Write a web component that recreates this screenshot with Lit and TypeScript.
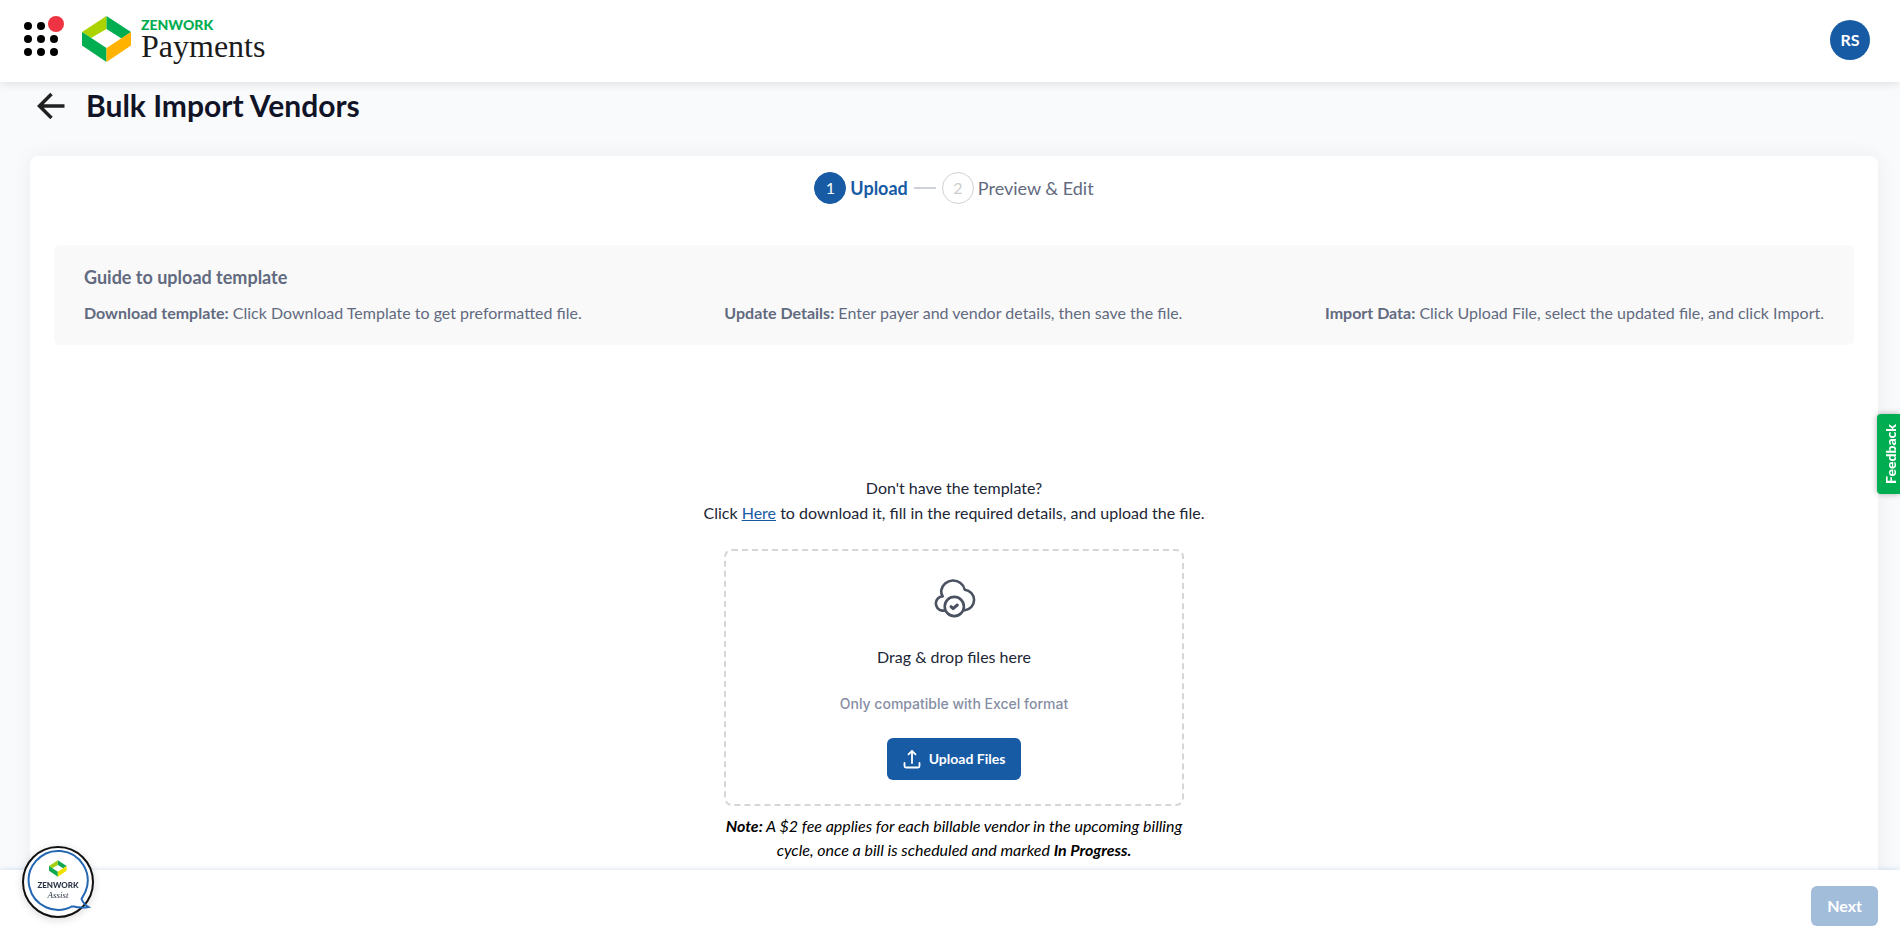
import { LitElement, html, css, svg } from "lit";
import { customElement } from "lit/decorators.js";

const mark = (lime: string, green: string, gold: string) => svg`
  <path fill=${lime} d="M0 16 24.5 0v13L9 22z" />
  <path fill=${green} d="M24.5 0 49 16l-9.5 6.5-15-9.5z" />
  <path fill=${green} d="M0 16l24.5 16v14L0 29.500z" />
  <path fill=${gold} d="M49 16v13.500L24.500 46V32z" />
`;

const STEPS = [
  { label: "Upload", active: true },
  { label: "Preview & Edit", active: false },
];

const GUIDE = [
  { title: "Download template:", text: "Click Download Template to get preformatted file." },
  { title: "Update Details:", text: "Enter payer and vendor details, then save the file." },
  { title: "Import Data:", text: "Click Upload File, select the updated file, and click Import." },
];

@customElement("app-header")
export class AppHeader extends LitElement {
  static styles = css`
    :host {
      display: flex;
      align-items: center;
      justify-content: space-between;
      box-sizing: border-box;
      height: 82px;
      padding: 0 30px 2px 22px;
      background: #fff;
      box-shadow: 0 0 10px rgba(0, 0, 0, 0.15);
      position: relative;
      z-index: 2;
    }
    .left, .brand {
      display: flex;
      align-items: center;
    }
    .left {
      gap: 16px;
      padding-bottom: 2px;
    }
    .brand {
      gap: 9px;
      color: #1b1b1b;
      text-decoration: none;
    }
    .apps {
      border: 0;
      padding: 0;
      background: none;
      cursor: pointer;
    }
    svg { display: block; }
    .name {
      display: flex;
      flex-direction: column;
    }
    .company {
      font: 900 14px/14px Lato, sans-serif;
      color: #00ad50;
    }
    .product {
      font: 32px/28px "Liberation Serif", serif;
    }
    .avatar {
      width: 40px;
      height: 40px;
      border: 0;
      border-radius: 50%;
      padding: 0;
      background: #185ba5;
      color: #fff;
      font: 700 16px/24px Lato, sans-serif;
    }
  `;

  render() {
    return html`
      <div class="left">
        <button class="apps" aria-label="Apps">
          <svg width="44" height="46" viewBox="0 0 44 46">
            ${[10, 23, 36].map((y) => [6, 19, 32].map((x) => svg`<circle cx=${x} cy=${y} r="4" />`))}
            <circle cx="34" cy="8" r="8" fill="#f03343" />
          </svg>
        </button>
        <a class="brand" href="#">
          <svg width="50" height="46" viewBox="0 0 50 46">${mark("#abd300", "#00ad50", "#ffb300")}</svg>
          <span class="name">
            <span class="company">ZENWORK</span>
            <span class="product">Payments</span>
          </span>
        </a>
      </div>
      <button class="avatar">RS</button>
    `;
  }
}

@customElement("upload-steps")
export class UploadSteps extends LitElement {
  static styles = css`
    ol {
      display: flex;
      justify-content: center;
      align-items: center;
      margin: 0;
      padding: 0;
      list-style: none;
      font: 18px/32px Lato, sans-serif;
      color: #626a80;
    }
    li {
      display: flex;
      align-items: center;
      gap: 4px;
    }
    li + li::before {
      content: "";
      width: 22px;
      height: 2px;
      margin: 0 2px 0 6px;
      background: #cfd1da;
    }
    .num {
      box-sizing: border-box;
      width: 32px;
      height: 32px;
      border: 1px solid #d2d2d2;
      border-radius: 50%;
      font-size: 16px;
      line-height: 30px;
      text-align: center;
      color: #cdcdcd;
    }
    .active { color: #185ba5; font-weight: 700; }
    .active .num {
      border-color: #185ba5;
      background: #185ba5;
      color: #fff;
      font-weight: 400;
    }
  `;

  render() {
    return html`<ol>
      ${STEPS.map(
        (s, i) => html`<li class=${s.active ? "active" : ""}><span class="num">${i + 1}</span><span>${s.label}</span></li>`
      )}
    </ol>`;
  }
}

@customElement("drop-zone")
export class DropZone extends LitElement {
  static styles = css`
    :host {
      display: flex;
      flex-direction: column;
      align-items: center;
      box-sizing: border-box;
      width: 460px;
      max-width: 100%;
      padding: 24px 20px;
      border: 2px dashed #d6d6d6;
      border-radius: 8px;
    }
    svg { display: block; }
    .title {
      margin: 24px 0 0;
      font: 16px/24px Lato, sans-serif;
      color: #212636;
    }
    .hint {
      margin: 24px 0;
      font: 500 14px/21px Inter, sans-serif;
      color: #868ea3;
    }
    .upload {
      display: flex;
      align-items: center;
      gap: 8px;
      height: 42px;
      padding: 0 16px;
      border: 0;
      border-radius: 6px;
      background: #185ba5;
      color: #fff;
      font: 700 14px/20px Lato, sans-serif;
      cursor: pointer;
    }
  `;

  render() {
    return html`
      <svg width="44" height="46" viewBox="0 0 44 46" fill="none" stroke="#4a5160" stroke-width="2.600" stroke-linecap="round" stroke-linejoin="round">
        <path d="M12 35.600H10A7.200 7.200 0 0 1 10.500 21.300" />
        <path d="M10.500 21.300Q9 18 9.200 15.500A12 11.700 0 0 1 32.800 14.800a10.300 10.300 0 0 1 0 20.500" />
        <circle cx="22.300" cy="31.500" r="9.600" />
        <path stroke-width="3" d="m19 31.700 2.100 2 4.200-3.700" />
      </svg>
      <p class="title">Drag &amp; drop files here</p>
      <p class="hint">Only compatible with Excel format</p>
      <button class="upload">
        <svg width="18" height="20" viewBox="0 0 18 20" fill="none" stroke="#fff" stroke-width="1.800" stroke-linecap="round" stroke-linejoin="round">
          <path d="M9 14V2M5.500 5.300 9 1.800l3.500 3.500M1.500 14v3q0 1.500 1.500 1.500h12q1.500 0 1.500-1.500v-3" />
        </svg>
        <span>Upload Files</span>
      </button>
    `;
  }
}

@customElement("assist-badge")
export class AssistBadge extends LitElement {
  static styles = css`
    .badge {
      display: flex;
      flex-direction: column;
      align-items: center;
      position: relative;
      box-sizing: border-box;
      width: 72px;
      height: 72px;
      padding: 12px 0 0;
      border: 2px solid #111;
      border-radius: 50%;
      background: #fff;
      box-shadow: 0 2px 8px rgba(0, 0, 0, 0.15);
      color: #2c3545;
    }
    .bubble {
      position: absolute;
      inset: 0;
    }
    .company { font: 900 8px/10px Lato, sans-serif; }
    .assist { font: italic 9px/10px "Liberation Serif", serif; }
    .mark { margin-bottom: 3px; }
  `;

  render() {
    return html`<button class="badge">
      <svg class="bubble" width="68" height="68" viewBox="0 0 68 68" fill="none" stroke="#2467b2" stroke-width="2">
        <path d="M48.500 58.200A29.500 29.500 0 1 1 61.500 43.500L57.500 51q2 5 7 8-8 1.500-16-.8" />
      </svg>
      <svg class="mark" width="18" height="17" viewBox="0 0 50 46">${mark("#a3d014", "#10a850", "#f0e000")}</svg>
      <span class="company">ZENWORK</span>
      <span class="assist">Assist</span>
    </button>`;
  }
}

@customElement("app-root")
export class AppRoot extends LitElement {
  static styles = css`
    :host {
      display: flex;
      flex-direction: column;
      height: 100vh;
      background: #f9fafc;
      font: 16px/24px Lato, sans-serif;
      color: #212636;
    }
    main {
      flex: 1;
      min-height: 0;
      display: flex;
      flex-direction: column;
      padding: 0 22px 0 30px;
      overflow: hidden;
    }
    .heading {
      display: flex;
      align-items: center;
      gap: 20px;
      padding: 0 6px;
      margin-bottom: 28px;
    }
    .back {
      display: block;
      padding: 0;
      border: 0;
      background: none;
      cursor: pointer;
    }
    .back svg { display: block; }
    h1 {
      margin: 0;
      font-size: 30px;
      line-height: 46px;
      font-weight: 700;
      color: #101426;
    }
    .card {
      flex: 1 0 auto;
      padding: 16px 24px 40px;
      border-radius: 8px;
      background: #fff;
      box-shadow: 0 0 20px rgba(0, 0, 0, 0.06);
    }
    .guide {
      margin-top: 41px;
      padding: 20px 30px;
      border-radius: 6px;
      background: #f9f9f9;
      color: #626a80;
    }
    h2 {
      margin: 0 0 12px;
      font-size: 18px;
      line-height: 24px;
      font-weight: 700;
    }
    .tips {
      display: flex;
      flex-wrap: wrap;
      justify-content: space-between;
      margin: 0;
      padding: 0;
      list-style: none;
    }
    .body {
      display: flex;
      flex-direction: column;
      align-items: center;
      margin-top: 130px;
    }
    .intro {
      margin: 0 0 24px;
      line-height: 25px;
      text-align: center;
    }
    .intro a { color: #185ba5; }
    .note {
      max-width: 460px;
      margin: 8px 0 0;
      font-style: italic;
      text-align: center;
      color: #000;
    }
    footer {
      display: flex;
      justify-content: flex-end;
      padding: 16px 22px 11px;
      background: #fff;
      box-shadow: 0 0 6px rgba(24, 91, 165, 0.2);
      position: relative;
    }
    .next {
      height: 40px;
      padding: 0 16px;
      border: 0;
      border-radius: 6px;
      background: #185ba5;
      opacity: 0.4;
      color: #fff;
      font: 700 16px/24px Lato, sans-serif;
    }
    .feedback {
      position: fixed;
      right: 0;
      top: 414px;
      width: 23px;
      height: 80px;
      padding: 0 0 0 4px;
      border: 0;
      border-radius: 4px 0 0 4px;
      background: #00ad50;
      box-shadow: 0 0 6px rgba(0, 0, 0, 0.3);
      color: #fff;
      font: 900 14px/20px Lato, sans-serif;
    }
    .feedback span {
      display: block;
      writing-mode: vertical-rl;
      transform: rotate(180deg);
    }
    assist-badge {
      position: fixed;
      left: 22px;
      bottom: 19px;
    }
  `;

  render() {
    return html`
      <app-header></app-header>
      <main>
        <div class="heading">
          <button class="back" aria-label="Back">
            <svg width="30" height="28" viewBox="0 0 30 28" fill="none" stroke="#212121" stroke-width="3.500">
              <path d="M28.500 15H4M15.500 3 3.500 15l12 12" />
            </svg>
          </button>
          <h1>Bulk Import Vendors</h1>
        </div>
        <section class="card">
          <upload-steps></upload-steps>
          <section class="guide">
            <h2>Guide to upload template</h2>
            <ul class="tips">
              ${GUIDE.map((g) => html`<li><strong>${g.title}</strong> ${g.text}</li>`)}
            </ul>
          </section>
          <div class="body">
            <p class="intro">
              Don't have the template?<br />
              Click <a href="#">Here</a> to download it, fill in the required details, and upload the file.
            </p>
            <drop-zone></drop-zone>
            <p class="note">
              <strong>Note:</strong> A $2 fee applies for each billable vendor in the upcoming billing cycle, once a
              bill is scheduled and marked <strong>In Progress.</strong>
            </p>
          </div>
        </section>
      </main>
      <footer><button class="next" disabled>Next</button></footer>
      <button class="feedback"><span>Feedback</span></button>
      <assist-badge></assist-badge>
    `;
  }
}
